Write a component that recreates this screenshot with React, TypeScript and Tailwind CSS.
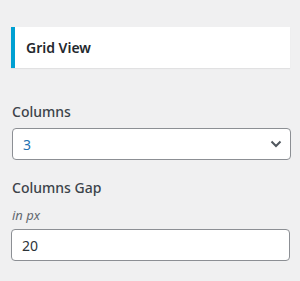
export default function App() {
  return (
    <div
      className="min-h-[281px] w-[300px] bg-[#f0f0f1] pl-3 pr-[9px] pt-[27px]"
      style={{ fontFamily: '"Noto Sans", "Open Sans", sans-serif' }}
    >
      {/* Section header */}
      <div className="-ml-px mr-px flex h-[41px] items-center border-l-4 border-[#00a0d2] bg-white pl-[11px] shadow-[0_1px_1px_rgba(0,0,0,0.06)]">
        <span className="text-[14px] font-semibold text-[#23282d]">Grid View</span>
      </div>

      {/* Columns */}
      <div className="mt-[34px]">
        <label className="block text-[14px] leading-5 font-medium text-[#3c434a]">Columns</label>
        <div className="relative mt-[6px] flex h-8 items-center rounded border border-[#8c8f94] bg-white pl-[10px]">
          <span className="text-[14px] text-[#2271b1]">3</span>
          <svg
            className="absolute right-[8px] top-1/2 -translate-y-1/2"
            width="12"
            height="8"
            viewBox="0 0 12 8"
            fill="none"
          >
            <path d="M1.5 1.5L6 6L10.5 1.5" stroke="#50575e" strokeWidth="2" />
          </svg>
        </div>
      </div>

      {/* Columns Gap */}
      <div className="mt-[18px]">
        <label className="block text-[14px] leading-5 font-medium text-[#3c434a]">Columns Gap</label>
        <p className="mt-2 text-[13px] leading-[18px] italic text-[#646970]">in px</p>
        <div className="-ml-px mr-px mt-[5px] flex h-8 items-center rounded border border-[#8c8f94] bg-white pl-[10px]">
          <span className="text-[14px] text-[#2c3338]">20</span>
        </div>
      </div>
    </div>
  );
}
